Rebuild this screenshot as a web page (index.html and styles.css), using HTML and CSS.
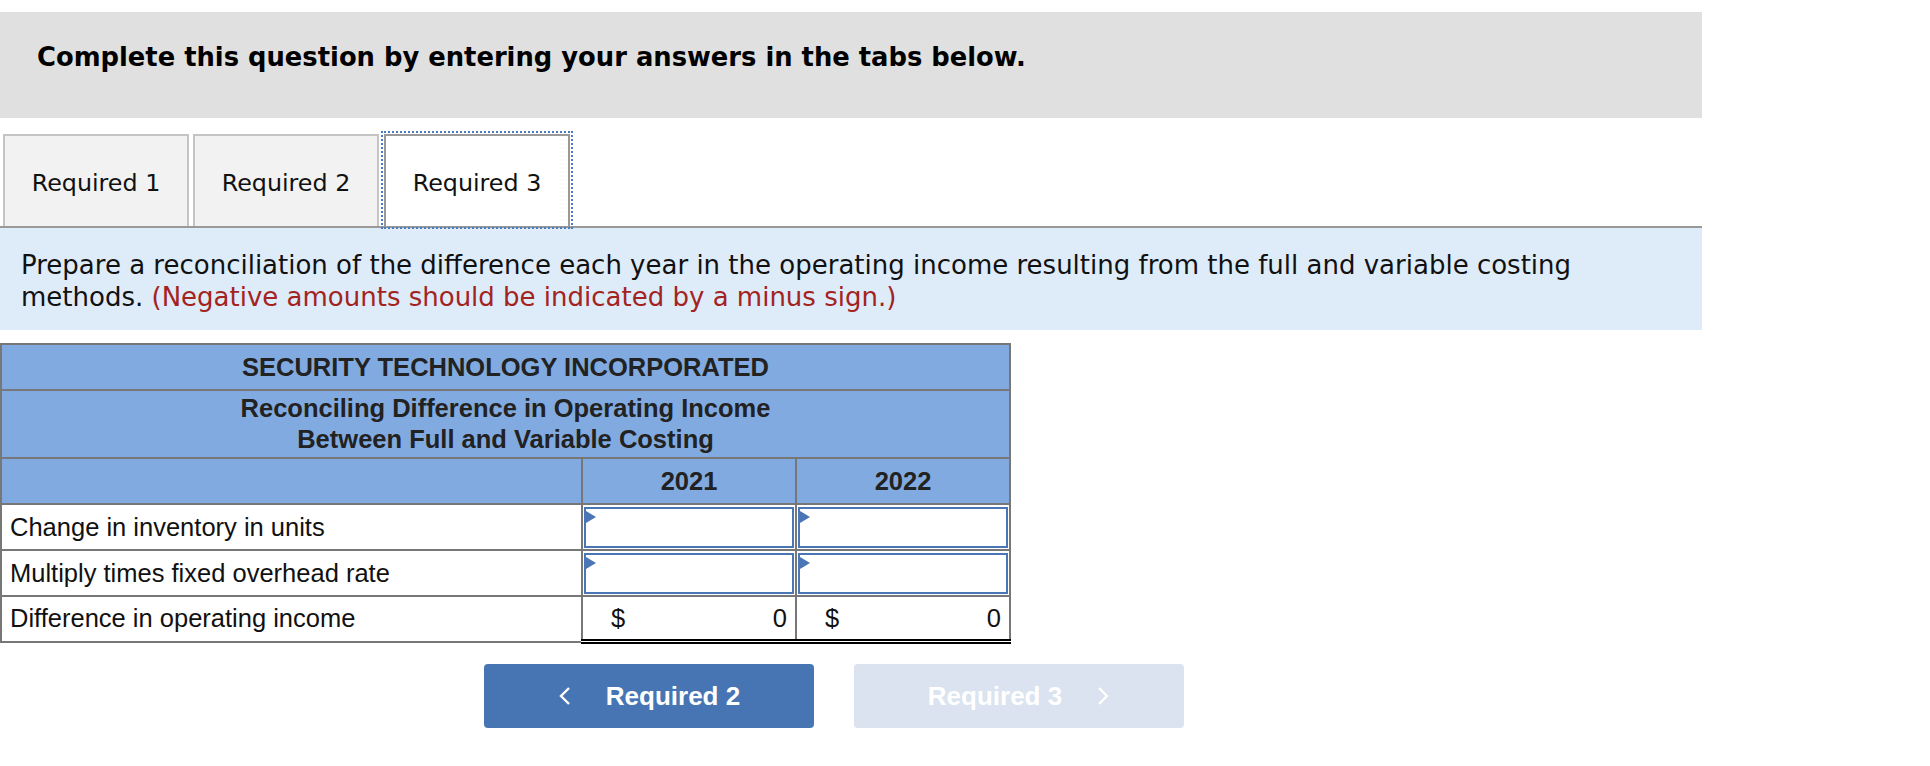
FILE: index.html
```html
<!DOCTYPE html>
<html>
<head>
<meta charset="utf-8">
<link rel="stylesheet" href="styles.css">
</head>
<body>
<div class="page">
  <div class="prompt">Complete this question by entering your answers in the tabs below.</div>

  <div class="tabs">
    <div class="tab">Required 1</div>
    <div class="tab">Required 2</div>
    <div class="tab active">Required 3</div>
  </div>

  <div class="instructions">
    <p class="instr-text">Prepare a reconciliation of the difference each year in the operating income resulting from the full and variable costing methods. <span class="warn">(Negative amounts should be indicated by a minus sign.)</span></p>
  </div>

  <table class="sheet">
    <colgroup>
      <col class="c-label">
      <col class="c-val">
      <col class="c-val">
    </colgroup>
    <tr class="r-title">
      <th colspan="3">SECURITY TECHNOLOGY INCORPORATED</th>
    </tr>
    <tr class="r-sub">
      <th colspan="3">Reconciling Difference in Operating Income<br>Between Full and Variable Costing</th>
    </tr>
    <tr class="r-years">
      <th></th>
      <th>2021</th>
      <th>2022</th>
    </tr>
    <tr class="r-data">
      <td class="label">Change in inventory in units</td>
      <td class="in"><div class="field"></div></td>
      <td class="in"><div class="field"></div></td>
    </tr>
    <tr class="r-data">
      <td class="label">Multiply times fixed overhead rate</td>
      <td class="in"><div class="field"></div></td>
      <td class="in"><div class="field"></div></td>
    </tr>
    <tr class="r-data r-total">
      <td class="label">Difference in operating income</td>
      <td class="total"><div class="money"><span>$</span><span>0</span></div></td>
      <td class="total"><div class="money"><span>$</span><span>0</span></div></td>
    </tr>
  </table>

  <div class="nav">
    <button class="btn prev">
      <svg class="chev" width="14" height="20" viewBox="0 0 14 20"><polyline points="11,2 3,10 11,18" fill="none" stroke="#fff" stroke-width="2.4"/></svg>
      <span>Required 2</span>
    </button>
    <button class="btn next">
      <span>Required 3</span>
      <svg class="chev" width="14" height="20" viewBox="0 0 14 20"><polyline points="3,2 11,10 3,18" fill="none" stroke="#fff" stroke-width="2.4"/></svg>
    </button>
  </div>
</div>
</body>
</html>
```

FILE: styles.css
```css
html, body {
  margin: 0;
  padding: 0;
  background: #fff;
}

body {
  font-family: "DejaVu Sans", Verdana, sans-serif;
  color: #111;
}

.page {
  width: 1702px;
  padding-top: 12px;
}

.prompt {
  background: #e0e0e0;
  height: 106px;
  box-sizing: border-box;
  padding: 29px 0 0 37px;
  font-weight: bold;
  font-size: 25.8px;
  line-height: 32px;
  color: #000;
}

.tabs {
  display: flex;
  align-items: flex-end;
  gap: 4px;
  margin-top: 16px;
  padding-left: 3px;
  border-bottom: 2px solid #999;
}

.tab {
  width: 186px;
  height: 92px;
  box-sizing: border-box;
  padding-top: 4px;
  border: 2px solid #c4c4c4;
  border-bottom: none;
  background: #f2f2f2;
  display: flex;
  align-items: center;
  justify-content: center;
  font-size: 23.8px;
  color: #111;
}

.tab.active {
  background: #fff;
  border-color: #999;
  outline: 2px dotted #4a7cc2;
  outline-offset: 1px;
  margin-left: 1px;
}

.instructions {
  background: #deebf8;
  padding: 21px 100px 17px 21px;
}

.instr-text {
  margin: 0;
  font-size: 26px;
  line-height: 32px;
  color: #111;
}

.warn {
  color: #a3231f;
}

.sheet {
  margin-top: 13px;
  width: 1010px;
  border-collapse: collapse;
  font-family: "Liberation Sans", Arial, sans-serif;
  font-size: 25.5px;
  color: #222;
  table-layout: fixed;
}

.c-label { width: 581px; }
.c-val { width: 214px; }

.sheet th {
  background: #81abe0;
  border: 2px solid #777;
  font-weight: bold;
  text-align: center;
  padding: 0;
  color: #222;
}

.r-title th { height: 44px; }
.r-sub th { height: 66px; line-height: 31px; }
.r-years th { height: 44px; }

.sheet td {
  border: 2px solid #777;
  padding: 0;
  height: 43px;
}

.sheet td.label {
  padding-left: 8px;
  color: #111;
}

.sheet td.in {
  padding: 1px 1px 0;
}

.field {
  position: relative;
  height: 41px;
  box-sizing: border-box;
  border: 2px solid #4a76b6;
  background: #fff;
}

.field::before {
  content: "";
  position: absolute;
  left: 0;
  top: 2px;
  border-left: 10px solid #4a76b6;
  border-top: 6px solid transparent;
  border-bottom: 6px solid transparent;
}

.r-total td {
  height: 42px;
}

.sheet td.total {
  border-top: 2px solid #000;
  border-bottom: 5px double #000;
}

.money {
  display: flex;
  justify-content: space-between;
  padding: 0 8px 0 28px;
  color: #111;
}

.nav {
  display: flex;
  gap: 40px;
  margin-top: 20px;
  padding-left: 484px;
}

.btn {
  width: 330px;
  height: 64px;
  border: none;
  border-radius: 4px;
  display: flex;
  align-items: center;
  justify-content: center;
  gap: 34px;
  font-family: "Liberation Sans", Arial, sans-serif;
  font-weight: bold;
  font-size: 26px;
  color: #fff;
  padding: 0;
}

.btn.prev {
  background: #4775b4;
}

.btn.next {
  background: #dae3ef;
}
```
